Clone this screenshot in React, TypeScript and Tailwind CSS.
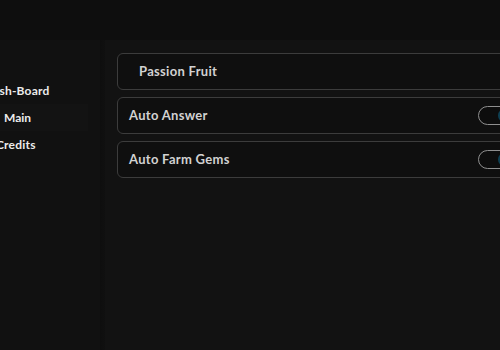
import React from "react";

function Toggle() {
  return (
    <div className="ml-auto w-[40px] h-[19px] shrink-0 rounded-full border border-[#8f8f8f] bg-[#0d0d0d] flex items-center pl-[19px]">
      <div className="w-[16px] h-[15px] rounded-full bg-[#0e3f52]" />
    </div>
  );
}

function Card({ label, pad, toggle }: { label: string; pad: string; toggle?: boolean }) {
  return (
    <div
      className={`w-[420px] h-[37px] shrink-0 rounded-[6px] border border-[#3c3c3c] bg-[#0f0f0f] flex items-center pr-[18px] ${pad}`}
    >
      <span className="text-[13px] font-bold text-[#d2d2d2] tracking-[0.3px]">{label}</span>
      {toggle && <Toggle />}
    </div>
  );
}

export default function App() {
  return (
    <div
      className="w-[500px] h-[350px] bg-[#121212] flex flex-col overflow-hidden"
      style={{ fontFamily: "Lato, 'Open Sans', sans-serif" }}
    >
      <div className="h-[40px] shrink-0 bg-[#0e0e0e]" />
      <div className="flex flex-1 min-h-0">
        <div className="w-[100px] shrink-0 bg-[#111111] pt-[37px] flex flex-col text-[12px] font-bold text-[#ececec] overflow-hidden">
          <div className="h-[27px] flex items-center ml-[-16px] tracking-[0.2px] whitespace-nowrap">Dash-Board</div>
          <div className="h-[27px] flex items-center pl-[4px] mr-[12px] bg-[#131313] whitespace-nowrap">Main</div>
          <div className="h-[27px] flex items-center ml-[-4px] tracking-[0.2px] whitespace-nowrap">Credits</div>
        </div>
        <div className="w-[5px] shrink-0 bg-gradient-to-r from-[#0e0e0e] to-[#101010]" />
        <div className="flex-1 flex flex-col gap-[7px] pl-[12px] pt-[13px] overflow-hidden">
          <Card label="Passion Fruit" pad="pl-[21px]" />
          <Card label="Auto Answer" pad="pl-[11px]" toggle />
          <Card label="Auto Farm Gems" pad="pl-[11px]" toggle />
        </div>
      </div>
    </div>
  );
}
